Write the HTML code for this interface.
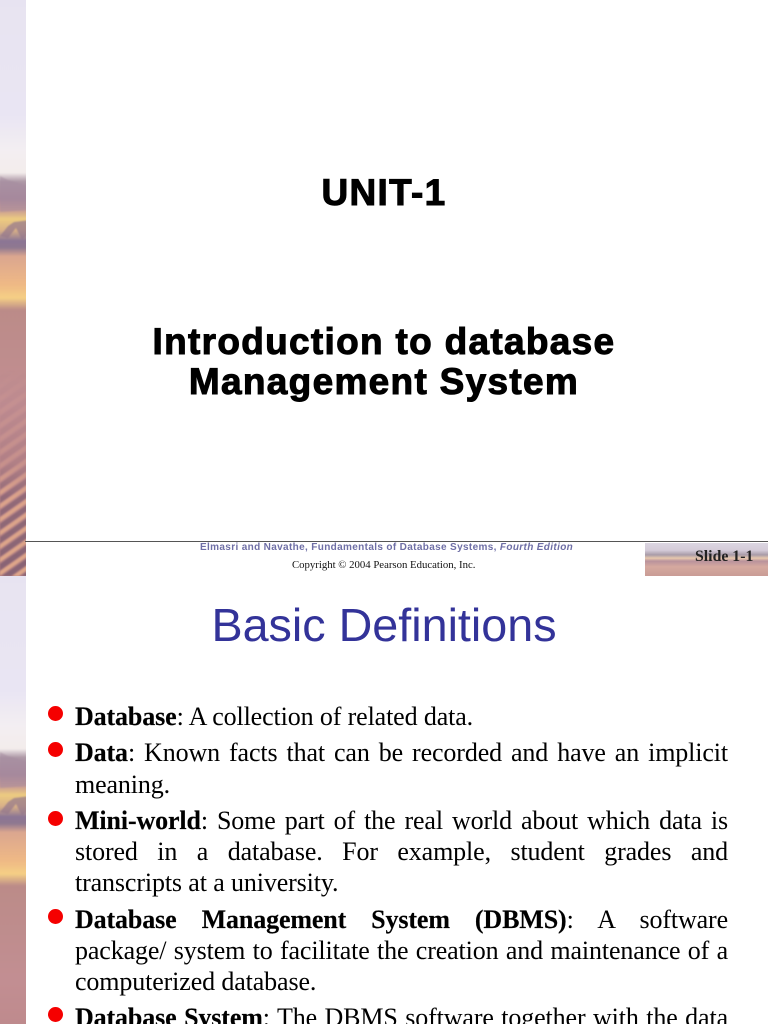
<!DOCTYPE html>
<html lang="en">
<head>
<meta charset="utf-8">
<title>Unit-1 Introduction to database Management System</title>
<style>
html,body{margin:0;padding:0;background:#fff;width:768px;height:1024px;overflow:hidden}
body{font-family:"Liberation Serif",serif;color:#000}
#w{position:relative;width:768px;height:1024px;overflow:hidden}
.strip{position:absolute;left:0;width:26px;display:block}
.t{position:absolute;white-space:nowrap}
.h{left:0;width:768px;text-align:center;font:bold 37px/40px "Liberation Sans",sans-serif;letter-spacing:1.3px;-webkit-text-stroke:1px #000}
.l{position:absolute;left:75px;width:653px;font-size:26px;line-height:31px;height:31px;white-space:nowrap;letter-spacing:-.125px}
.j{white-space:normal;text-align:justify;text-align-last:justify}
.b{position:absolute;left:48px;width:15px;height:15px;border-radius:50%;background:#f50000}
b{-webkit-text-stroke:.15px #000}
</style>
</head>
<body>
<div id="w">

<svg class="strip" style="top:0;height:576px" viewBox="0 0 26 576" preserveAspectRatio="none" aria-hidden="true">
  <defs>
    <linearGradient id="g" gradientUnits="userSpaceOnUse" x1="0" y1="0" x2="0" y2="576">
      <stop offset="0" stop-color="#e7e3f1"/>
      <stop offset=".2" stop-color="#e9e5f3"/>
      <stop offset=".26" stop-color="#f3eef2"/>
      <stop offset=".3" stop-color="#f3eceb"/>
      <stop offset=".315" stop-color="#ad98a6"/>
      <stop offset=".345" stop-color="#a8879b"/>
      <stop offset=".365" stop-color="#c99c93"/>
      <stop offset=".38" stop-color="#eccb80"/>
      <stop offset=".4" stop-color="#d8b088"/>
      <stop offset=".418" stop-color="#8b7594"/>
      <stop offset=".43" stop-color="#8f7890"/>
      <stop offset=".445" stop-color="#dba68f"/>
      <stop offset=".495" stop-color="#efb985"/>
      <stop offset=".517" stop-color="#f5cf85"/>
      <stop offset=".538" stop-color="#bb8b88"/>
      <stop offset=".7" stop-color="#c28e92"/>
      <stop offset=".85" stop-color="#bb8688"/>
      <stop offset="1" stop-color="#ad7c80"/>
    </linearGradient>
    <pattern id="r" width="10" height="11" patternUnits="userSpaceOnUse" patternTransform="rotate(-35)">
      <rect y="0" width="10" height="5" fill="#7a5a70" opacity=".75"/>
      <rect y="6" width="10" height="3.5" fill="#efb48c" opacity=".75"/>
    </pattern>
    <linearGradient id="f" gradientUnits="userSpaceOnUse" x1="0" y1="370" x2="0" y2="576">
      <stop offset="0" stop-color="#fff" stop-opacity="0"/>
      <stop offset=".45" stop-color="#fff" stop-opacity=".25"/>
      <stop offset=".62" stop-color="#fff" stop-opacity=".85"/>
      <stop offset="1" stop-color="#fff"/>
    </linearGradient>
    <mask id="m" maskUnits="userSpaceOnUse" x="0" y="370" width="30" height="206"><rect x="0" y="370" width="30" height="206" fill="url(#f)"/></mask>
    <filter id="bl" x="-10%" y="-2%" width="120%" height="104%"><feGaussianBlur stdDeviation=".9"/></filter>
  </defs>
  <g filter="url(#bl)">
    <rect x="-4" y="-4" width="34" height="584" fill="url(#g)"/>
    <polygon points="0,176 8,180 30,186 30,210 0,212" fill="#a48a9e" opacity=".5"/>
    <polygon points="0,236 8,226 14,222 30,220 30,232 22,240 16,228 8,238" fill="#94788c" opacity=".7"/>
    <rect y="370" width="30" height="206" fill="url(#r)" mask="url(#m)"/>
  </g>
</svg>
<svg class="strip" style="top:576px;height:448px" viewBox="0 0 26 448" preserveAspectRatio="none" aria-hidden="true">
  <g filter="url(#bl)">
    <rect x="-4" y="-4" width="34" height="456" fill="url(#g)"/>
    <polygon points="0,176 8,180 30,186 30,210 0,212" fill="#a48a9e" opacity=".5"/>
    <polygon points="0,236 8,226 14,222 30,220 30,232 22,240 16,228 8,238" fill="#94788c" opacity=".7"/>
  </g>
</svg>

<div class="t h" style="top:173px">UNIT-1</div>
<div class="t h" style="top:322px">Introduction to database</div>
<div class="t h" style="top:362px">Management System</div>

<div style="position:absolute;left:25px;top:541px;width:743px;height:1px;background:#555"></div>
<div class="t" style="left:200px;top:541px;font:bold 10px/13px 'Liberation Sans',sans-serif;color:#6f6fa6;letter-spacing:.35px">Elmasri and Navathe, Fundamentals of Database Systems, <i>Fourth Edition</i></div>
<div class="t" style="left:292px;top:559px;font-size:10.75px;line-height:13px;color:#111">Copyright © 2004 Pearson Education, Inc.</div>

<div style="position:absolute;left:645px;top:543px;width:123px;height:33px;background:linear-gradient(180deg,#dcd6e2 0,#d4cbd8 22%,#a99ba8 36%,#e7c8ad 46%,#b9929c 55%,#d5a99f 72%,#c99c96 100%)"></div>
<div class="t" style="left:695px;top:549px;font:bold 15.8px/16px 'Liberation Serif',serif;color:#222">Slide 1-1</div>

<div class="t" style="left:0;width:768px;top:599px;text-align:center;font:46.7px/52px 'Liberation Sans',sans-serif;color:#333399">Basic Definitions</div>

<div class="b" style="top:706px"></div>
<div class="l" style="top:701px"><b>Database</b>: A collection of related data.</div>
<div class="b" style="top:742px"></div>
<div class="l j" style="top:737px"><b>Data</b>: Known facts that can be recorded and have an implicit</div>
<div class="l" style="top:769px">meaning.</div>
<div class="b" style="top:811px"></div>
<div class="l j" style="top:805px"><b>Mini-world</b>: Some part of the real world about which data is</div>
<div class="l j" style="top:836px">stored in a database. For example, student grades and</div>
<div class="l" style="top:867px">transcripts at a university.</div>
<div class="b" style="top:909px"></div>
<div class="l j" style="top:904px"><b>Database Management System (DBMS)</b>: A software</div>
<div class="l j" style="top:935px">package/ system to facilitate the creation and maintenance of a</div>
<div class="l" style="top:966px">computerized database.</div>
<div class="b" style="top:1007px"></div>
<div class="l j" style="top:1002px;height:22px;overflow:hidden"><b>Database System</b>: The DBMS software together with the data</div>

</div>
</body>
</html>
